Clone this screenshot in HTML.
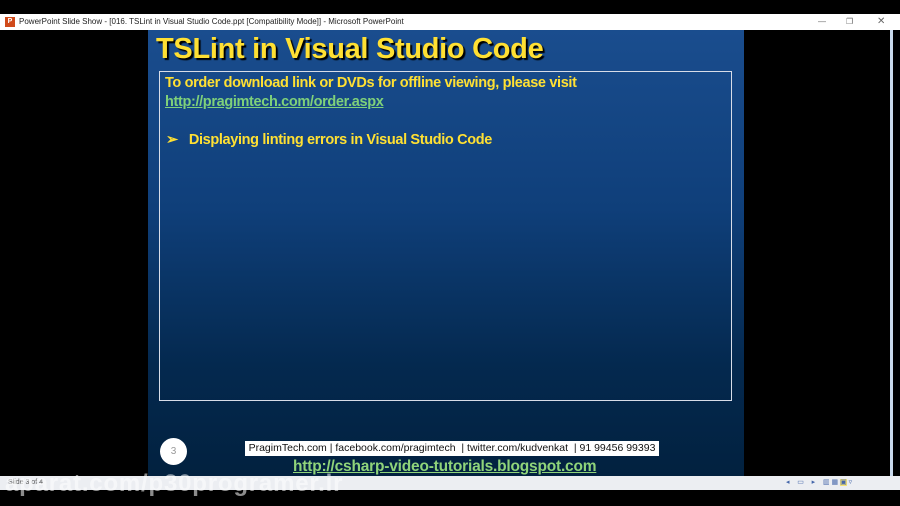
<!DOCTYPE html>
<html><head><style>
*{margin:0;padding:0;box-sizing:border-box}
body{width:900px;height:506px;background:#000;position:relative;overflow:hidden;font-family:"Liberation Sans",sans-serif}
.tb{position:absolute;left:0;top:14px;width:900px;height:16px;background:#fff;font-size:8px;color:#222;line-height:16px}
.tb .ic{position:absolute;left:5px;top:3px;width:10px;height:10px;background:#d04a1a;color:#fff;font-size:7px;line-height:10px;text-align:center;font-weight:bold}
.slide{position:absolute;left:148px;top:30px;width:596px;height:446px;background:linear-gradient(#1a4d8e 0%,#0f3f7a 40%,#04294f 75%,#02213f 100%)}
.title{position:absolute;left:8px;top:3px;font-size:29px;font-weight:bold;color:#ffe033;text-shadow:2px 2px 1px #000;letter-spacing:-0.3px}
.box{position:absolute;left:11px;top:41px;width:573px;height:330px;border:1px solid #d8dde8}
.t{position:absolute;font-size:14.5px;font-weight:bold;color:#ffe033;letter-spacing:-0.35px}
.lnk{color:#7fd17a;text-decoration:underline}
.num{position:absolute;left:12px;top:408px;width:27px;height:27px;border-radius:50%;background:#fff;color:#999;font-size:10px;text-align:center;line-height:27px}
.ft{position:absolute;left:97px;top:411px;width:414px;height:15px;background:#fff;color:#111;font-size:10.5px;line-height:15px;text-align:center;white-space:nowrap}
.url{position:absolute;left:145px;top:428px;font-size:15.5px;font-weight:bold;color:#8fd47a;text-decoration:underline;letter-spacing:-0.2px}
.sb{position:absolute;left:0;top:476px;width:900px;height:14px;background:#eceef2;font-size:7px;color:#555;line-height:14px;padding-left:8px}
.wm{position:absolute;left:5px;top:470px;font-size:24px;font-weight:bold;color:rgba(255,255,255,0.55);letter-spacing:0.8px}
.strip{position:absolute;left:890px;top:30px;width:3px;height:446px;background:#c9d9ec}
</style></head><body>
<div class="tb"><div class="ic">P</div><span style="position:absolute;left:19px">PowerPoint Slide Show - [016. TSLint in Visual Studio Code.ppt [Compatibility Mode]] - Microsoft PowerPoint</span>
<span style="position:absolute;left:818px;color:#666">—</span><span style="position:absolute;left:846px;color:#666">❐</span><span style="position:absolute;left:877px;color:#666;font-size:10px">✕</span></div>
<div class="strip"></div>
<div class="slide">
<div class="title">TSLint in Visual Studio Code</div>
<div class="box"></div>
<div class="t" style="left:17px;top:45px">To order download link or DVDs for offline viewing, please visit</div>
<div class="t lnk" style="left:17px;top:64px">http://pragimtech.com/order.aspx</div>
<div class="t" style="left:18px;top:102px">➢&nbsp;&nbsp;&nbsp;Displaying linting errors in Visual Studio Code</div>
<div class="num">3</div>
<div class="ft">PragimTech.com | facebook.com/pragimtech &nbsp;| twitter.com/kudvenkat &nbsp;| 91 99456 99393</div>
<div class="url">http://csharp-video-tutorials.blogspot.com</div>
</div>
<div class="sb">Slide 3 of 4<span style="position:absolute;left:786px;color:#46a">◂ &nbsp;&nbsp; ▭ &nbsp;&nbsp; ▸ &nbsp;&nbsp; ▥ ▦ <span style="background:#f5e27a">▣</span> ▿</span></div>
<div class="wm">aparat.com/p30programer.ir</div>
</body></html>
